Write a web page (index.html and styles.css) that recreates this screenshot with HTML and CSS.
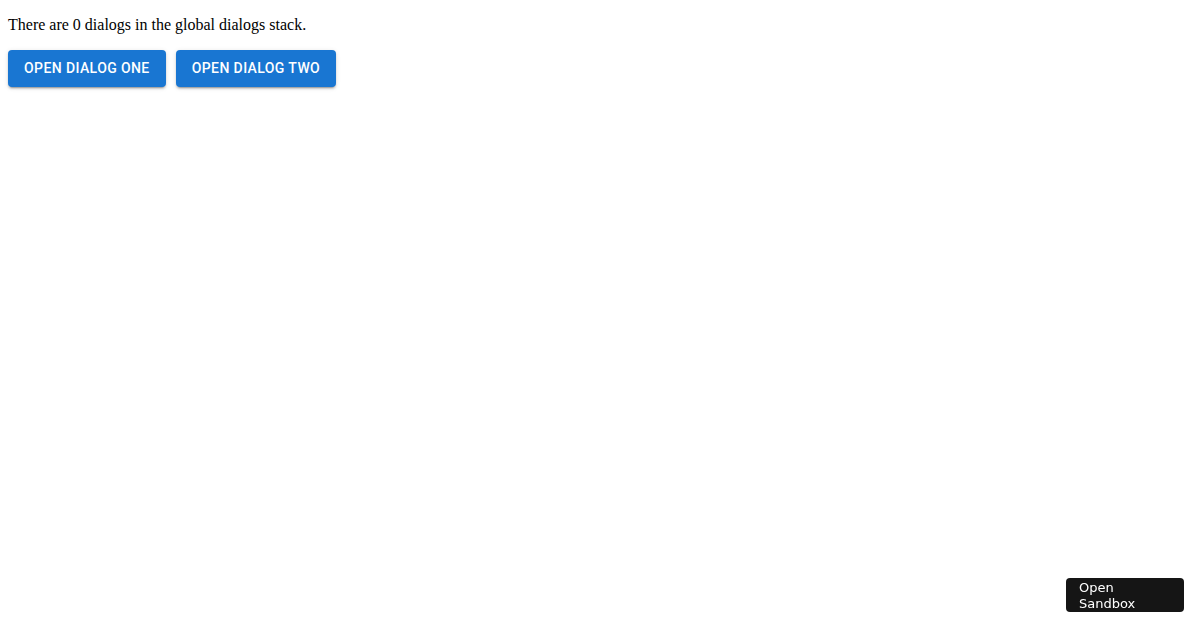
FILE: index.html
```html
<!DOCTYPE html>
<html>
<head>
<meta charset="utf-8">
<link rel="stylesheet" href="styles.css">
</head>
<body>
<p class="status">There are 0 dialogs in the global dialogs stack.</p>
<div class="actions">
  <button class="btn">Open dialog one</button>
  <button class="btn">Open dialog two</button>
</div>
<a class="sandbox">Open Sandbox</a>
</body>
</html>
```

FILE: styles.css
```css
body {
  margin: 0;
  padding: 16px 8px 8px;
  font-family: "Liberation Serif", "Times New Roman", serif;
  font-size: 16px;
  background: #fff;
  color: #000;
}
.status {
  margin: 0 0 16px;
}
.actions {
  display: flex;
  gap: 10px;
}
.btn {
  font-family: Roboto, "Liberation Sans", sans-serif;
  font-weight: 500;
  font-size: 14px;
  line-height: 1.75;
  letter-spacing: 0.02857em;
  text-transform: uppercase;
  color: #fff;
  background: #1976d2;
  border: 0;
  border-radius: 4px;
  padding: 6px 16px;
  min-width: 64px;
  box-shadow: 0px 3px 1px -2px rgba(0,0,0,0.2), 0px 2px 2px 0px rgba(0,0,0,0.14), 0px 1px 5px 0px rgba(0,0,0,0.12);
  cursor: pointer;
}
.sandbox {
  position: fixed;
  right: 16px;
  bottom: 18px;
  width: 118px;
  height: 34px;
  box-sizing: border-box;
  padding: 2px 30px 0 13px;
  background: #151515;
  color: #fff;
  border-radius: 4px;
  font-family: "DejaVu Sans", sans-serif;
  font-size: 13px;
  line-height: 16px;
}
```
